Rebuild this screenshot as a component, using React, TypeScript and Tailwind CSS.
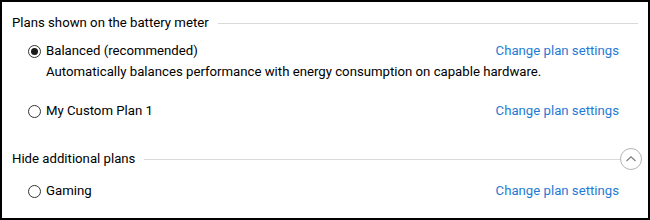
export default function App() {
  const font = { fontFamily: 'Roboto, "Noto Sans", sans-serif' }
  return (
    <div
      className="w-[650px] h-[220px] bg-white border-2 border-black text-[13.2px] text-black overflow-hidden"
      style={font}
    >
      <div className="pl-[10px] pr-[10px] pt-[10px]">
        <SectionHeader label="Plans shown on the battery meter" />
        <div className="mt-[7px]">
          <PlanRow name="Balanced (recommended)" checked />
          <p className="pl-[34px] mt-[2px] leading-[18px]">
            Automatically balances performance with energy consumption on capable hardware.
          </p>
        </div>
        <div className="mt-[20px]">
          <PlanRow name="My Custom Plan 1" />
        </div>
        <div className="mt-[27px]">
          <SectionHeader label="Hide additional plans" collapse />
        </div>
        <div className="mt-[11px]">
          <PlanRow name="Gaming" />
        </div>
      </div>
    </div>
  )
}

function SectionHeader({ label, collapse }: { label: string; collapse?: boolean }) {
  return (
    <div className="flex items-center h-[22px]">
      <span className="leading-[20px]">{label}</span>
      <div className="flex-1 h-px bg-[#d9d9d9] ml-[9px]" />
      {collapse && (
        <span className="-mr-[4px] w-[22px] h-[22px] rounded-full border border-[#b4b4b4] flex items-center justify-center">
          <svg width="12" height="8" viewBox="0 0 12 8" fill="none" stroke="#7a7a7a" strokeWidth="1.1">
            <path d="M1.5 6 L6 1.8 L10.5 6" />
          </svg>
        </span>
      )}
    </div>
  )
}

function PlanRow({ name, checked }: { name: string; checked?: boolean }) {
  return (
    <div className="flex items-center h-[20px] pl-[16px] pr-[19px]">
      <span className="w-[13px] h-[13px] rounded-full border border-[#333] flex items-center justify-center shrink-0">
        {checked && <span className="w-[7px] h-[7px] rounded-full bg-[#1a1a1a]" />}
      </span>
      <span className="ml-[5px] leading-[20px]">{name}</span>
      <a className="ml-auto text-[#1e7bd4] leading-[20px]" href="#">
        Change plan settings
      </a>
    </div>
  )
}
